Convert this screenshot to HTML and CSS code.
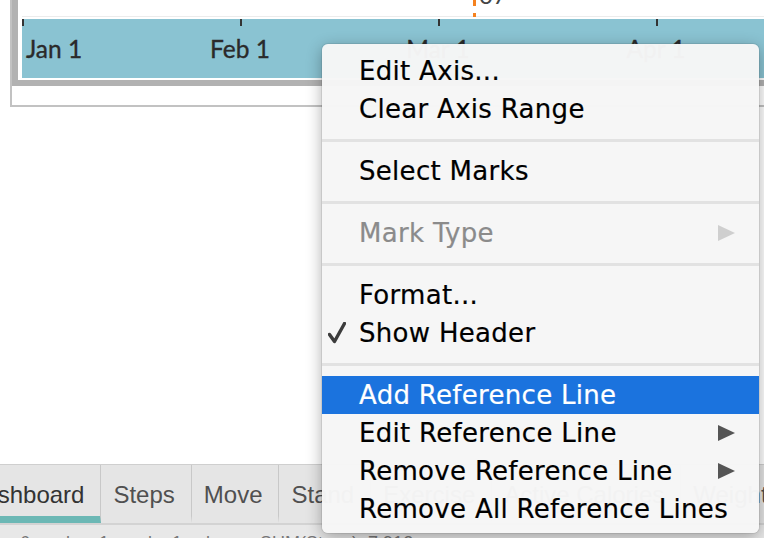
FILE: index.html
```html
<!DOCTYPE html>
<html>
<head>
<meta charset="utf-8">
<link rel="stylesheet" href="styles.css">
</head>
<body>
<div class="page">
  <div class="sheet-area">
    <div class="dash-frame">
      <div class="ws">
        <div class="plot">
          <span class="ref-mark"></span>
          <span class="ref-label">07</span>
        </div>
        <div class="axis">
          <span class="tick" style="left:0px"></span>
          <span class="tick" style="left:218px"></span>
          <span class="tick" style="left:416px"></span>
          <span class="tick" style="left:634px"></span>
          <span class="lbl first" style="left:4px">Jan 1</span>
          <span class="lbl" style="left:218px">Feb 1</span>
          <span class="lbl" style="left:416px">Mar 1</span>
          <span class="lbl" style="left:634px">Apr 1</span>
        </div>
      </div>
    </div>
  </div>
  <div class="tabbar">
    <div class="tab active">Dashboard</div>
    <div class="tab">Steps</div>
    <div class="tab">Move</div>
    <div class="tab">Stand</div>
    <div class="tab">Exercise</div>
    <div class="tab">Active Calories</div>
    <div class="tab">Weight</div>
  </div>
  <div class="status">6 marks &nbsp; 1 row by 1 column &nbsp; SUM(Steps): 7,912</div>
</div>

<div class="menu">
  <div class="item"><span></span><span>Edit Axis...</span><span></span></div>
  <div class="item"><span></span><span>Clear Axis Range</span><span></span></div>
  <div class="sep"></div>
  <div class="item"><span></span><span>Select Marks</span><span></span></div>
  <div class="sep"></div>
  <div class="item disabled"><span></span><span>Mark Type</span><span class="arrow"></span></div>
  <div class="sep"></div>
  <div class="item"><span></span><span>Format...</span><span></span></div>
  <div class="item"><span class="check"><svg width="18" height="22" viewBox="0 0 18 22"><path d="M1.5 12.5 L6.5 19.5 L16.5 1.5" fill="none" stroke="#3c3c3c" stroke-width="3.4" stroke-linejoin="round" stroke-linecap="round"/></svg></span><span>Show Header</span><span></span></div>
  <div class="sep"></div>
  <div class="item hl"><span></span><span>Add Reference Line</span><span></span></div>
  <div class="item"><span></span><span>Edit Reference Line</span><span class="arrow"></span></div>
  <div class="item"><span></span><span>Remove Reference Line</span><span class="arrow"></span></div>
  <div class="item"><span></span><span>Remove All Reference Lines</span><span></span></div>
</div>
</body>
</html>
```

FILE: styles.css
```css
html, body {
  margin: 0;
  padding: 0;
  background: #ffffff;
}
body {
  width: 764px;
  height: 538px;
  overflow: hidden;
  position: relative;
  font-family: "Liberation Sans", Arial, sans-serif;
}
.page {
  display: flex;
  flex-direction: column;
  height: 538px;
}
.sheet-area {
  height: 464px;
  flex: none;
}
.dash-frame {
  margin-left: 10px;
  border-left: 2px solid #c2c2c2;
  border-bottom: 2px solid #c2c2c2;
  padding-bottom: 19px;
}
.ws {
  border-left: 6px solid #b2b2b2;
  border-bottom: 6px solid #b2b2b2;
  padding-left: 4px;
  padding-bottom: 2px;
}
.plot {
  height: 16px;
  border-bottom: 1px solid #ececec;
  margin-bottom: 2px;
  position: relative;
}
.ref-mark {
  position: absolute;
  left: 451px;
  top: 0;
  width: 3px;
  height: 17px;
  background: repeating-linear-gradient(to bottom, #f5821f 0 6px, transparent 6px 13px);
}
.ref-label {
  position: absolute;
  left: 457px;
  top: -17px;
  font-family: Lato, "Liberation Sans", sans-serif;
  font-size: 24px;
  line-height: 24px;
  color: #444;
}
.axis {
  height: 59px;
  background: #8ac3d2;
  position: relative;
}
.tick {
  position: absolute;
  top: 0;
  width: 2px;
  height: 7px;
  background: #333;
}
.lbl {
  position: absolute;
  top: 16px;
  transform: translateX(-50%);
  font-family: Lato, "Liberation Sans", sans-serif;
  font-size: 24.5px;
  line-height: 28px;
  color: #2a2a2a;
  -webkit-text-stroke: 0.35px #2a2a2a;
  white-space: nowrap;
}
.lbl.first {
  transform: none;
}
.tabbar {
  flex: none;
  display: flex;
  height: 59px;
  box-sizing: border-box;
  border-top: 1px solid #cfcfcf;
  background: #e5e5e5;
  margin-left: -45px;
}
.tab {
  box-sizing: border-box;
  height: 58px;
  padding: 16px 16px 0 12px;
  border-right: 1px solid #c8c8c8;
  border-bottom: 7px solid transparent;
  font-size: 24px;
  line-height: 27px;
  color: #505050;
  white-space: nowrap;
}
.tab.active {
  color: #333;
  border-bottom-color: #6cb8b5;
}
.status {
  flex: 1;
  border-top: 2px solid #d3d3d3;
  background: #e8e8e8;
  padding: 7px 0 0 20px;
  font-size: 18px;
  line-height: 22px;
  color: #777;
  white-space: nowrap;
}
.menu {
  position: absolute;
  left: 322px;
  top: 44px;
  width: 437px;
  height: 489px;
  box-sizing: border-box;
  padding-top: 8px;
  background: rgba(246, 246, 246, 0.975);
  border-radius: 6px;
  box-shadow: 0 4px 16px rgba(0, 0, 0, 0.32), 0 0 0 1px rgba(0, 0, 0, 0.07);
  font-family: "DejaVu Sans", "Liberation Sans", sans-serif;
  font-size: 26px;
  letter-spacing: 0.3px;
  color: #000;
}
.item {
  display: grid;
  grid-template-columns: 37px 1fr auto;
  align-items: center;
  height: 38px;
  line-height: 38px;
  padding-right: 24px;
  white-space: nowrap;
  -webkit-text-stroke: 0.2px currentColor;
}
.item.disabled {
  color: #8b8b8b;
}
.item.hl {
  background: #1b73de;
  color: #fff;
}
.check {
  display: flex;
  margin-left: 6px;
}
.arrow {
  width: 0;
  height: 0;
  border-top: 8.5px solid transparent;
  border-bottom: 8.5px solid transparent;
  border-left: 17px solid #555;
}
.item.disabled .arrow {
  border-left-color: #cfcfcf;
}
.sep {
  height: 3px;
  background: #e2e2e2;
  margin: 11px 0 10px;
}
```
